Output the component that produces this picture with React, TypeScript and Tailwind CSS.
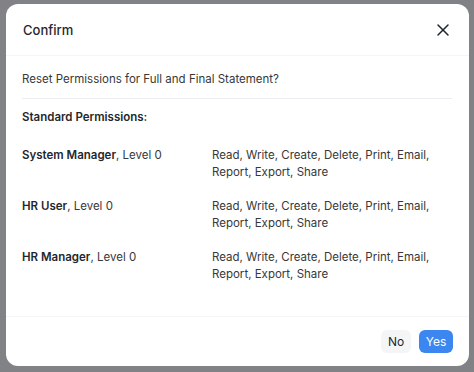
import { X } from "lucide-react";

const roles = [
  { name: "System Manager", level: "Level 0" },
  { name: "HR User", level: "Level 0" },
  { name: "HR Manager", level: "Level 0" },
];

const perms = "Read, Write, Create, Delete, Print, Email, Report, Export, Share";

export default function App() {
  return (
    <div
      className="h-[372px] w-[474px] bg-[#808285] pt-[4px] pl-[6px]"
      style={{ fontFamily: "Inter, 'Noto Sans', sans-serif" }}
    >
      <div className="flex h-[362px] w-[463px] flex-col rounded-[12px] bg-white text-[#383838]">
        {/* Header */}
        <div className="flex h-[52px] items-center justify-between border-b border-[#f4f5f6] pl-[17px] pr-[16px]">
          <h3 className="mt-[3px] text-[13px] font-medium text-[#1f272e]">Confirm</h3>
          <X size={20} strokeWidth={1.8} className="text-[#1f272e]" />
        </div>

        {/* Body */}
        <div className="flex-1 px-[16px] pt-[15px] text-[11.5px] leading-[17px]">
          <p>Reset Permissions for Full and Final Statement?</p>
          <div className="mt-[10px] w-[430px] border-t border-[#ebeef0]" />
          <p className="mt-[10px] font-semibold text-[#1f272e]">Standard Permissions:</p>
          <div className="mt-[21px] flex flex-col gap-[17px]">
            {roles.map((r) => (
              <div key={r.name} className="flex">
                <div className="w-[190px] shrink-0">
                  <span className="font-semibold text-[#1f272e]">{r.name}</span>, {r.level}
                </div>
                <div className="w-[230px]">{perms}</div>
              </div>
            ))}
          </div>
        </div>

        {/* Footer */}
        <div className="flex h-[50px] items-center justify-end gap-[8px] border-t border-[#f4f5f6] pr-[16px]">
          <button className="h-[23px] w-[30px] rounded-[6px] bg-[#f4f5f6] text-[12px] text-[#1f272e]">No</button>
          <button className="h-[23px] w-[34px] rounded-[6px] bg-[#3b86ef] text-[12px] text-white">Yes</button>
        </div>
      </div>
    </div>
  );
}
